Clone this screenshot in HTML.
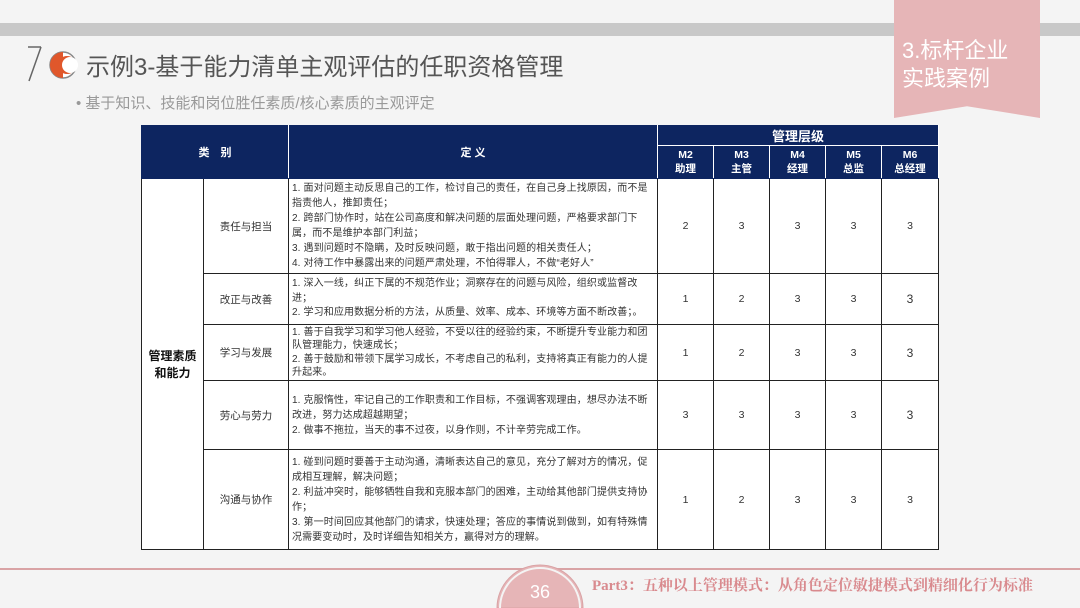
<!DOCTYPE html>
<html><head><meta charset="utf-8"><style>
*{margin:0;padding:0;box-sizing:border-box}
html,body{width:1080px;height:608px;overflow:hidden}
body{background:#f4f4f4;position:relative;font-family:"Liberation Sans","Noto Sans CJK SC",sans-serif}
.bar{position:absolute;left:0;top:23px;width:1080px;height:13px;background:#c8c8c8}
.rib{position:absolute;left:894px;top:0;width:146px;height:118px;background:#e6b5b7;clip-path:polygon(0 0,100% 0,100% 100%,50% 90%,0 100%)}
.rib div{position:absolute;left:8px;top:37px;color:#fff;font-size:22px;line-height:28px}
.title{position:absolute;left:86px;top:47px;font-size:24px;color:#555}
.sub{position:absolute;left:76px;top:92px;font-size:15px;color:#999}
table{position:absolute;left:141px;top:125px;border-collapse:collapse;width:797px;table-layout:fixed}
td{border:1px solid #222;background:#fff;font-size:10.5px;color:#333;text-align:center;vertical-align:middle;overflow:hidden}
td.d{text-align:left;line-height:15px;padding:0 2px 0 3px;font-size:10px;letter-spacing:0.12px}
.h td{background:#0d2560;color:#fff;font-weight:bold;border-color:#0d2560;border-right:1px solid #fff}
td.n{font-size:12px}
.foot{position:absolute;left:0;top:568px;width:1080px;height:2px;background:#d9a3a5}
.num{position:absolute;left:497px;top:582px;width:86px;text-align:center;color:#fff;font-size:18px}
.ft{position:absolute;left:592px;top:574px;color:#d98a8e;font-weight:bold;font-size:15px;font-family:"Liberation Serif","Noto Serif CJK SC",serif}
</style></head><body>
<div class="bar"></div>
<div class="rib"><div>3.标杆企业<br>实践案例</div></div>
<svg style="position:absolute;left:26px;top:44px" width="56" height="40"><path d="M3 37 L15 3 M2 3 H15" stroke="#666" stroke-width="1.5" fill="none"/><circle cx="37" cy="21" r="13" fill="#fff" stroke="#888" stroke-width="1.5"/><path d="M37 8 A13 13 0 0 0 37 34 Z" fill="#e0572b"/><circle cx="41" cy="21" r="9" fill="#e0572b"/><circle cx="44" cy="21" r="8" fill="#fff"/></svg>
<div class="title">示例3-基于能力清单主观评估的任职资格管理</div>
<div class="sub">• 基于知识、技能和岗位胜任素质/核心素质的主观评定</div>
<table>
<colgroup><col style="width:62px"><col style="width:85px"><col style="width:369px"><col style="width:56px"><col style="width:56px"><col style="width:56px"><col style="width:56px"><col style="width:57px"></colgroup>
<tr class="h" style="height:19px"><td colspan="2" rowspan="2" style="font-size:11px">类　别</td><td rowspan="2" style="font-size:11px">定 义</td><td colspan="5" style="font-size:13px;border-bottom:1px solid #fff">管理层级</td></tr>
<tr class="h" style="height:33px"><td>M2<br>助理</td><td>M3<br>主管</td><td>M4<br>经理</td><td>M5<br>总监</td><td>M6<br>总经理</td></tr>
<tr style="height:95px"><td rowspan="5" style="font-weight:bold;font-size:12px;color:#111">管理素质<br>和能力</td><td>责任与担当</td><td class="d">1. 面对问题主动反思自己的工作，检讨自己的责任，在自己身上找原因，而不是指责他人，推卸责任；<br>2. 跨部门协作时，站在公司高度和解决问题的层面处理问题，严格要求部门下属，而不是维护本部门利益；<br>3. 遇到问题时不隐瞒，及时反映问题，敢于指出问题的相关责任人；<br>4. 对待工作中暴露出来的问题严肃处理，不怕得罪人，不做“老好人”</td><td>2</td><td>3</td><td>3</td><td>3</td><td>3</td></tr>
<tr style="height:51px"><td>改正与改善</td><td class="d" style="line-height:14.5px">1. 深入一线，纠正下属的不规范作业；洞察存在的问题与风险，组织或监督改进；<br>2. 学习和应用数据分析的方法，从质量、效率、成本、环境等方面不断改善；。</td><td>1</td><td>2</td><td>3</td><td>3</td><td class="n">3</td></tr>
<tr style="height:56px"><td>学习与发展</td><td class="d" style="line-height:13.5px">1. 善于自我学习和学习他人经验，不受以往的经验约束，不断提升专业能力和团队管理能力，快速成长；<br>2. 善于鼓励和带领下属学习成长，不考虑自己的私利，支持将真正有能力的人提升起来。</td><td>1</td><td>2</td><td>3</td><td>3</td><td class="n">3</td></tr>
<tr style="height:69px"><td>劳心与劳力</td><td class="d">1. 克服惰性，牢记自己的工作职责和工作目标，不强调客观理由，想尽办法不断改进，努力达成超越期望；<br>2. 做事不拖拉，当天的事不过夜，以身作则，不计辛劳完成工作。</td><td>3</td><td>3</td><td>3</td><td>3</td><td class="n">3</td></tr>
<tr style="height:100px"><td>沟通与协作</td><td class="d">1. 碰到问题时要善于主动沟通，清晰表达自己的意见，充分了解对方的情况，促成相互理解，解决问题；<br>2. 利益冲突时，能够牺牲自我和克服本部门的困难，主动给其他部门提供支持协作；<br>3. 第一时间回应其他部门的请求，快速处理；答应的事情说到做到，如有特殊情况需要变动时，及时详细告知相关方，赢得对方的理解。</td><td>1</td><td>2</td><td>3</td><td>3</td><td>3</td></tr>
</table>
<div class="foot"></div>
<svg style="position:absolute;left:494px;top:562px" width="92" height="46"><path d="M3 46 A43 43 0 0 1 89 46 Z" fill="#e6b5b7" stroke="#d9a3a5" stroke-width="1"/><path d="M6 46 A40 40 0 0 1 86 46" fill="none" stroke="#f4f4f4" stroke-width="2"/></svg>
<div class="num">36</div>
<div class="ft">Part3：五种以上管理模式：从角色定位敏捷模式到精细化行为标准</div>
</body></html>
